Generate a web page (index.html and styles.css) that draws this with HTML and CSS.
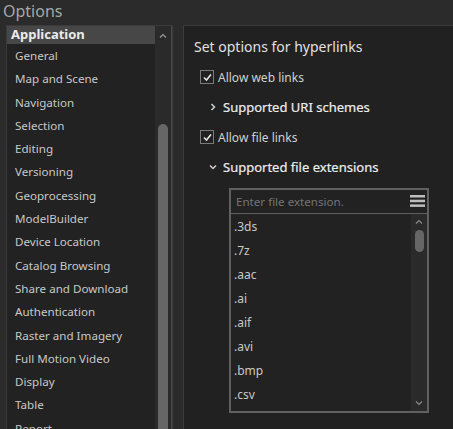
FILE: index.html
```html
<!DOCTYPE html>
<html lang="en">
<head>
    <meta charset="UTF-8">
    <title>Options</title>
    <link rel="stylesheet" href="styles.css">
</head>
<body>
    <div class="title">Options</div>
    <div class="main">
        <div class="sidebar">
            <div class="nav">
                <div class="nav-head">Application</div>
                <div class="nav-item">General</div>
                <div class="nav-item">Map and Scene</div>
                <div class="nav-item">Navigation</div>
                <div class="nav-item">Selection</div>
                <div class="nav-item">Editing</div>
                <div class="nav-item">Versioning</div>
                <div class="nav-item">Geoprocessing</div>
                <div class="nav-item">ModelBuilder</div>
                <div class="nav-item">Device Location</div>
                <div class="nav-item">Catalog Browsing</div>
                <div class="nav-item">Share and Download</div>
                <div class="nav-item">Authentication</div>
                <div class="nav-item">Raster and Imagery</div>
                <div class="nav-item">Full Motion Video</div>
                <div class="nav-item">Display</div>
                <div class="nav-item">Table</div>
                <div class="nav-item">Report</div>
            </div>
            <div class="nav-scroll">
                <div class="arrow-up">
                    <svg width="8" height="5" viewBox="0 0 8 5"><path d="M1 4.5 L4 1.5 L7 4.5" fill="none" stroke="#9a9a9a" stroke-width="1.2"/></svg>
                </div>
                <div class="nav-thumb"></div>
            </div>
        </div>

        <div class="panel">
            <div class="panel-title">Set options for hyperlinks</div>

            <label class="check-row">
                <span class="checkbox">
                    <svg width="11" height="11" viewBox="0 0 11 11"><path d="M2 5.5 L4.5 8 L9 2.5" fill="none" stroke="#e6e6e6" stroke-width="1.6"/></svg>
                </span>
                Allow web links
            </label>

            <div class="expander">
                <svg class="chev" width="8" height="8" viewBox="0 0 8 8"><path d="M2.5 1 L5.5 4 L2.5 7" fill="none" stroke="#cfcfcf" stroke-width="1.5"/></svg>
                Supported URI schemes
            </div>

            <label class="check-row">
                <span class="checkbox">
                    <svg width="11" height="11" viewBox="0 0 11 11"><path d="M2 5.5 L4.5 8 L9 2.5" fill="none" stroke="#e6e6e6" stroke-width="1.6"/></svg>
                </span>
                Allow file links
            </label>

            <div class="expander">
                <svg class="chev" width="8" height="8" viewBox="0 0 8 8"><path d="M1 2.5 L4 5.5 L7 2.5" fill="none" stroke="#cfcfcf" stroke-width="1.5"/></svg>
                Supported file extensions
            </div>

            <div class="ext-box">
                <div class="ext-input">
                    <span class="placeholder">Enter file extension.</span>
                    <svg class="menu-icon" width="15" height="12" viewBox="0 0 15 12">
                        <rect x="0" y="0" width="15" height="2.5" fill="#bdbdbd"/>
                        <rect x="0" y="4.7" width="15" height="2.5" fill="#bdbdbd"/>
                        <rect x="0" y="9.4" width="15" height="2.5" fill="#bdbdbd"/>
                    </svg>
                </div>
                <div class="ext-body">
                    <div class="ext-list">
                        <div class="ext-item">.3ds</div>
                        <div class="ext-item">.7z</div>
                        <div class="ext-item">.aac</div>
                        <div class="ext-item">.ai</div>
                        <div class="ext-item">.aif</div>
                        <div class="ext-item">.avi</div>
                        <div class="ext-item">.bmp</div>
                        <div class="ext-item">.csv</div>
                    </div>
                    <div class="ext-scroll">
                        <svg width="8" height="5" viewBox="0 0 8 5"><path d="M1 4.5 L4 1.5 L7 4.5" fill="none" stroke="#8a8a8a" stroke-width="1.2"/></svg>
                        <div class="ext-thumb"></div>
                        <div class="spacer"></div>
                        <svg width="8" height="5" viewBox="0 0 8 5"><path d="M1 0.5 L4 3.5 L7 0.5" fill="none" stroke="#8a8a8a" stroke-width="1.2"/></svg>
                    </div>
                </div>
            </div>
        </div>
    </div>
</body>
</html>
```

FILE: styles.css
```css
html, body {
    margin: 0;
    padding: 0;
}
body {
    width: 453px;
    height: 429px;
    overflow: hidden;
    background: #2b2b2b;
    font-family: "Noto Sans", "Open Sans", sans-serif;
    color: #cfcfcf;
}
.title {
    height: 25px;
    line-height: 22px;
    padding-left: 3px;
    font-size: 16px;
    color: #a6a6a6;
}
.main {
    display: flex;
    height: 404px;
}
.sidebar {
    display: flex;
    width: 165px;
    margin-left: 6px;
    border: 1px solid #3a3a3a;
    border-bottom: none;
    background: #222222;
}
.nav {
    flex: 1;
    overflow: hidden;
}
.nav-head {
    height: 18px;
    line-height: 17px;
    padding-left: 4px;
    background: #474747;
    color: #ebebeb;
    font-size: 13px;
    font-weight: bold;
}
.nav-item {
    height: 23.3px;
    line-height: 23px;
    padding-left: 8px;
    font-size: 11.6px;
    color: #c8c8c8;
    white-space: nowrap;
}
.nav-scroll {
    width: 16px;
    background: #2a2a2a;
    display: flex;
    flex-direction: column;
    align-items: center;
    border-right: 1px solid #4a4a4a;
}
.arrow-up {
    height: 18px;
    display: flex;
    align-items: center;
    justify-content: center;
}
.nav-thumb {
    width: 10px;
    flex: 1;
    margin-top: 80px;
    background: #666666;
    border-radius: 5px 5px 0 0;
}
.panel {
    flex: 1;
    margin-left: 10px;
    border-left: 1px solid #3c3c3c;
    border-top: 1px solid #3c3c3c;
    background: #212121;
    padding: 11px 0 0 10px;
}
.panel-title {
    font-size: 14px;
    color: #e0e0e0;
    height: 20px;
    line-height: 20px;
    margin-bottom: 5px;
}
.check-row {
    display: flex;
    align-items: center;
    gap: 4px;
    height: 30px;
    margin-left: 6px;
    font-size: 12px;
    color: #d0d0d0;
}
.checkbox {
    width: 12px;
    height: 12px;
    border: 1px solid #7a7a7a;
    display: flex;
    align-items: center;
    justify-content: center;
}
.expander {
    display: flex;
    align-items: center;
    gap: 6px;
    height: 30px;
    margin-left: 15px;
    font-size: 13px;
    color: #ececec;
    -webkit-text-stroke: 0.2px #ececec;
}
.ext-box {
    width: 196px;
    height: 221px;
    margin: 6px 0 0 35px;
    border: 2px solid #606060;
    display: flex;
    flex-direction: column;
    background: #222222;
}
.ext-input {
    height: 23px;
    border-bottom: 1px solid #606060;
    display: flex;
    align-items: center;
    justify-content: space-between;
    padding: 0 2px 0 5px;
}
.placeholder {
    font-size: 11.6px;
    color: #747474;
}
.menu-icon {
    margin-bottom: 2px;
}
.ext-body {
    flex: 1;
    display: flex;
    overflow: hidden;
}
.ext-list {
    flex: 1;
    padding-top: 1px;
}
.ext-item {
    height: 24px;
    line-height: 24px;
    padding-left: 3px;
    font-size: 12px;
    color: #c8c8c8;
}
.ext-scroll {
    width: 16px;
    background: #2a2a2a;
    display: flex;
    flex-direction: column;
    align-items: center;
    padding: 5px 0 5px;
}
.ext-thumb {
    width: 9px;
    height: 22px;
    margin-top: 6px;
    background: #666666;
    border-radius: 5px;
}
.spacer {
    flex: 1;
}
```
